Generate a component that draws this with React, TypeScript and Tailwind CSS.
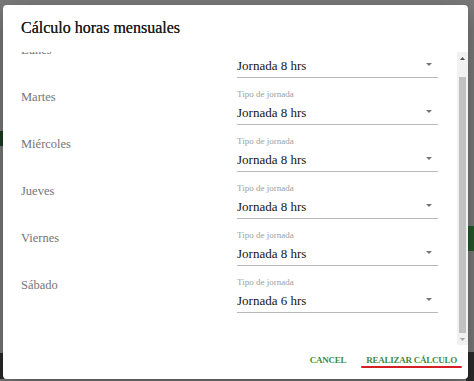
import React from "react";

const days = [
  { day: "Lunes", value: "Jornada 8 hrs" },
  { day: "Martes", value: "Jornada 8 hrs" },
  { day: "Miércoles", value: "Jornada 8 hrs" },
  { day: "Jueves", value: "Jornada 8 hrs" },
  { day: "Viernes", value: "Jornada 8 hrs" },
  { day: "Sábado", value: "Jornada 6 hrs" },
];

function Arrow() {
  return (
    <svg width="6" height="3" viewBox="0 0 6 3" className="mb-[2px] mr-[6px]">
      <polygon points="0,0 6,0 3,3" fill="#757575" />
    </svg>
  );
}

function Row({ day, value }: { day: string; value: string }) {
  return (
    <div className="flex h-[47px]">
      <div className="w-[216px] pt-[10px] text-[12.5px] leading-[16px] text-[#757575]">
        {day}
      </div>
      <div className="w-[201px] flex flex-col pt-[9px]">
        <div className="h-[13px] text-[9px] leading-[12px] text-[#9e9e9e]">Tipo de jornada</div>
        <div className="h-[23px] flex items-center justify-between">
          <span className="text-[13px] leading-[16px] text-[#141414]">{value}</span>
          <Arrow />
        </div>
        <div className="h-[1px] bg-[#b8b8b8]" />
      </div>
    </div>
  );
}

function Scrollbar() {
  return (
    <div className="w-[11px] h-full flex flex-col bg-[#f1f1f1]">
      <div className="h-[12px] flex items-center justify-center">
        <svg width="5" height="3" viewBox="0 0 5 3">
          <polygon points="0,3 5,3 2.5,0" fill="#505050" />
        </svg>
      </div>
      <div className="h-[13px]" />
      <div className="flex-1 mx-[2px] bg-[#c1c1c1]" />
      <div className="h-[12px] flex items-center justify-center">
        <svg width="5" height="3" viewBox="0 0 5 3">
          <polygon points="0,0 5,0 2.5,3" fill="#a3a3a3" />
        </svg>
      </div>
    </div>
  );
}

export default function App() {
  return (
    <div className="relative w-[474px] h-[381px] overflow-hidden bg-[#7b7b7b] font-['Liberation_Serif',serif]">
      {/* page behind the overlay */}
      <div className="absolute left-0 top-[131px] w-[4px] h-[15px] bg-[#1f3d22]" />
      <div className="absolute left-0 top-[353px] w-[4px] h-[26px] bg-[#2a2a2a]" />
      <div className="absolute right-0 top-[226px] w-[8px] h-[25px] bg-[#245a2b]" />
      <div className="absolute right-0 top-[352px] w-[8px] h-[29px] bg-[#2b2b2b]" />

      <div className="absolute left-[3px] top-[5px] w-[465px] h-[374px] bg-white rounded-[4px] shadow-[0_8px_24px_rgba(0,0,0,0.35)] flex flex-col overflow-hidden">
        <div className="h-[47px] pl-[18px] pt-[13px]">
          <h2 className="text-[16px] leading-[20px] text-[#1f1f1f] [text-shadow:0_0_0.5px_#1f1f1f]">
            Cálculo horas mensuales
          </h2>
        </div>

        <div className="h-[293px] flex">
          <div className="flex-1 overflow-hidden pl-[18px]">
            <div className="-mt-[20px]">
              {days.map((d) => (
                <Row key={d.day} day={d.day} value={d.value} />
              ))}
            </div>
          </div>
          <Scrollbar />
        </div>

        <div className="flex-1 flex justify-end items-start pr-[6px] pt-[9px] gap-[15px]">
          <button className="text-[9px] leading-[12px] font-bold tracking-[-0.25px] text-[#3f8b45]">
            CANCEL
          </button>
          <button className="flex flex-col">
            <span className="px-[5px] text-[9px] leading-[12px] font-bold tracking-[-0.25px] text-[#3f8b45]">
              REALIZAR CÁLCULO
            </span>
            <span className="h-[2px] bg-[#d41f26] rounded-full" />
          </button>
        </div>
      </div>
    </div>
  );
}
